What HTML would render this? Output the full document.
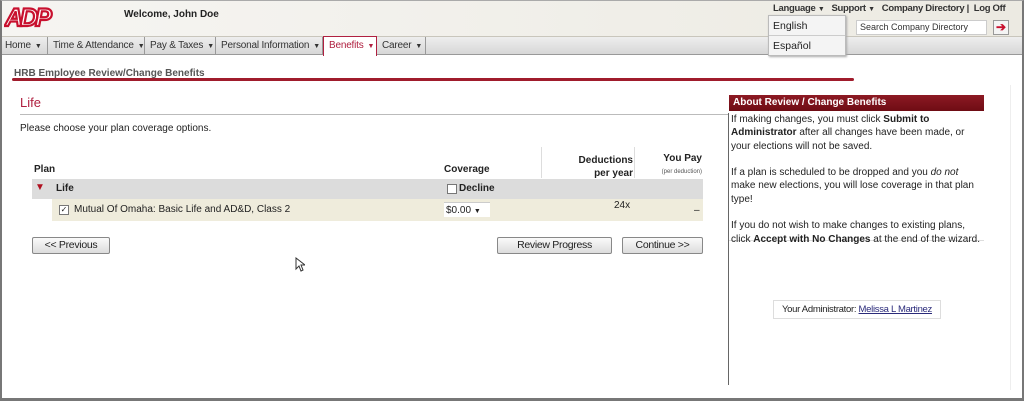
<!DOCTYPE html>
<html><head><style>
*{margin:0;padding:0;box-sizing:border-box}
body{width:1024px;height:401px;position:relative;overflow:hidden;background:#fff;font-family:"Liberation Sans",Arial,sans-serif;font-size:11px;color:#222}
.a{position:absolute;white-space:nowrap}
.hdr{left:0;top:0;width:1024px;height:37px;background:linear-gradient(90deg,#f6f5f2,#eceae2);border-bottom:1px solid #c9c6bc}
.nav{left:0;top:37px;width:1024px;height:18px;background:linear-gradient(#eeeeee,#d7d7d7);border-bottom:1px solid #999}
.tab{position:absolute;top:0;height:18px;line-height:17px;font-size:10px;color:#333;padding-left:5px;border-right:1px solid #999;white-space:nowrap;overflow:hidden;letter-spacing:-0.2px}
.tab b{font-weight:normal;font-size:7px;margin-left:4px}
.btn{position:absolute;height:17px;line-height:15px;text-align:center;border:1px solid #888;border-radius:2px;background:linear-gradient(#fafafa,#dcdcdc);font-size:10.5px;color:#222;white-space:nowrap;letter-spacing:-0.3px}
.frame{left:0;top:0;width:1024px;height:401px;border-left:2px solid #777;border-right:2px solid #777;border-bottom:3px solid #777;border-top:1px solid #aaa}
</style></head><body>
<div class="a hdr"></div>
<svg class="a" style="left:4px;top:4px" width="54" height="26" viewBox="0 0 54 26">
<text x="1" y="22" font-family="Liberation Sans" font-weight="bold" font-style="italic" font-size="25" fill="#fff" stroke="#c8102e" stroke-width="2.2" letter-spacing="-3">ADP</text>
</svg>
<div class="a" style="left:124px;top:9px;font-weight:bold;font-size:10px;color:#222">Welcome, John Doe</div>
<div class="a" style="left:773px;top:3px;font-weight:bold;font-size:9.5px;color:#333;letter-spacing:-0.3px">Language <span style="font-size:7px">▼</span> &nbsp;&nbsp;Support <span style="font-size:7px">▼</span> &nbsp;&nbsp;Company Directory | &nbsp;Log Off</div>
<div class="a" style="left:856px;top:20px;width:131px;height:15px;background:#fff;border:1px solid #ccc;font-size:9px;line-height:13px;padding-left:3px;color:#333">Search Company Directory</div>
<div class="a" style="left:993px;top:20px;width:16px;height:15px;background:#f4f4f4;border:1px solid #999;color:#c8102e;font-weight:bold;font-size:12px;line-height:12px;text-align:center">➔</div>
<div class="a nav"></div>
<div class="tab" style="left:0;top:37px;width:48px">Home<b>▼</b></div>
<div class="tab" style="left:48px;top:37px;width:97px">Time &amp; Attendance<b>▼</b></div>
<div class="tab" style="left:145px;top:37px;width:71px">Pay &amp; Taxes<b>▼</b></div>
<div class="tab" style="left:216px;top:37px;width:107px">Personal Information<b>▼</b></div>
<div class="tab" style="left:323px;top:36px;width:54px;height:20px;background:#fff;color:#b02040;border:1px solid #b02040;border-bottom:none">Benefits<b>▼</b></div>
<div class="tab" style="left:377px;top:37px;width:49px">Career<b>▼</b></div>
<div class="a" style="left:768px;top:15px;width:78px;height:41px;background:#f4f4f4;border:1px solid #bbb;box-shadow:1px 1px 2px #aaa">
<div style="height:20px;line-height:20px;padding-left:4px;font-size:10.5px;border-bottom:1px solid #ccc">English</div>
<div style="height:20px;line-height:20px;padding-left:4px;font-size:10.5px">Español</div></div>
<div class="a" style="left:14px;top:68px;font-weight:bold;font-size:10px;color:#555">HRB Employee Review/Change Benefits</div>
<div class="a" style="left:12px;top:78px;width:842px;height:3px;background:#a01c2c;border-radius:2px"></div>
<div class="a" style="left:20px;top:95px;font-size:13px;color:#b02040">Life</div>
<div class="a" style="left:20px;top:114px;width:708px;height:1px;background:#bbb"></div>
<div class="a" style="left:20px;top:123px;font-size:10px;color:#222">Please choose your plan coverage options.</div>
<div class="a" style="left:728px;top:113px;width:1px;height:272px;background:#666"></div>
<div class="a" style="left:541px;top:147px;width:1px;height:31px;background:#ddd"></div>
<div class="a" style="left:634px;top:147px;width:1px;height:31px;background:#ddd"></div>
<div class="a" style="left:34px;top:164px;font-weight:bold;font-size:10px">Plan</div>
<div class="a" style="left:444px;top:164px;font-weight:bold;font-size:10px">Coverage</div>
<div class="a" style="left:560px;top:154px;width:73px;text-align:right;font-weight:bold;font-size:10px;line-height:13px">Deductions<br>per year</div>
<div class="a" style="left:636px;top:153px;width:66px;text-align:right;font-weight:bold;font-size:10px;line-height:12px">You Pay<br><span style="font-weight:normal;font-size:6px;color:#555">(per deduction)</span></div>
<div class="a" style="left:32px;top:179px;width:671px;height:20px;background:#dcdcdc"></div>
<div class="a" style="left:35px;top:182px;color:#b01020;font-size:10px">▼</div>
<div class="a" style="left:56px;top:183px;font-weight:bold;font-size:10px">Life</div>
<div class="a" style="left:447px;top:184px;width:10px;height:10px;border:1px solid #777;background:#fff"></div>
<div class="a" style="left:459px;top:183px;font-weight:bold;font-size:10px">Decline</div>
<div class="a" style="left:52px;top:199px;width:651px;height:22px;background:#efecdc"></div>
<div class="a" style="left:59px;top:205px;width:10px;height:10px;border:1px solid #777;background:#fff;font-size:8px;line-height:8px;text-align:center">✓</div>
<div class="a" style="left:74px;top:204px;font-size:10px">Mutual Of Omaha: Basic Life and AD&amp;D, Class 2</div>
<div class="a" style="left:444px;top:202px;width:46px;height:15px;background:#fff;border-top:1px solid #ccc;font-size:10px;line-height:15px;padding-left:2px">$0.00 <span style="font-size:7px">▼</span></div>
<div class="a" style="left:614px;top:200px;font-size:10px">24x</div>
<div class="a" style="left:694px;top:205px;font-size:10px">–</div>
<div class="btn" style="left:32px;top:237px;width:78px">&lt;&lt; Previous</div>
<div class="btn" style="left:497px;top:237px;width:115px">Review Progress</div>
<div class="btn" style="left:622px;top:237px;width:81px">Continue &gt;&gt;</div>
<svg class="a" style="left:295px;top:257px" width="10" height="15"><path d="M1 1 L1 12 L4 9 L6 14 L8 13 L6 8 L10 8 Z" fill="#fff" stroke="#333"/></svg>
<div class="a" style="left:729px;top:95px;width:255px;height:16px;background:linear-gradient(#8d1a24,#6e0c14);color:#fff;font-weight:bold;font-size:10px;line-height:16px;padding-left:4px">About Review / Change Benefits</div>
<div class="a" style="left:729px;top:113px;width:255px;height:128px;border-bottom:1px solid #ddd;font-size:10px;line-height:13.3px;padding-left:2px;padding-right:4px;color:#222;white-space:normal">If making changes, you must click <b>Submit to</b><br><b>Administrator</b> after all changes have been made, or your elections will not be saved.<br><br>If a plan is scheduled to be dropped and you <i>do not</i><br>make new elections, you will lose coverage in that plan type!<br><br>If you do not wish to make changes to existing plans, click <b>Accept with No Changes</b> at the end of the wizard.</div>
<div class="a" style="left:773px;top:300px;width:168px;height:19px;border:1px solid #ddd;font-size:9.5px;line-height:17px;text-align:center;letter-spacing:-0.3px">Your Administrator: <span style="color:#2a2a7a;text-decoration:underline">Melissa L Martinez</span></div>
<div class="a" style="left:1010px;top:85px;width:1px;height:305px;background:#eee"></div>
<div class="a frame"></div>
</body></html>
